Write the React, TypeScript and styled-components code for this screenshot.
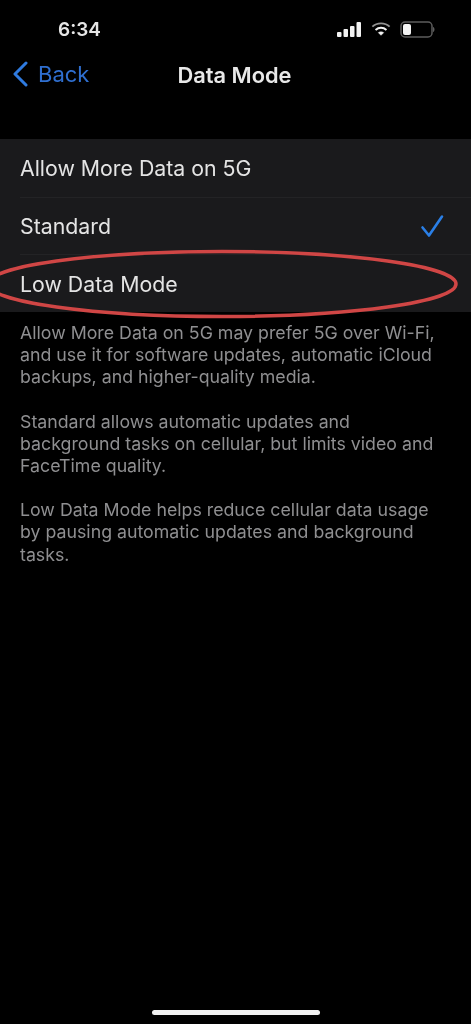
import styled, { createGlobalStyle } from "styled-components";

const GlobalStyle = createGlobalStyle`
  html, body {
    margin: 0;
    padding: 0;
    background: #000;
  }
`;

const Screen = styled.div`
  position: relative;
  width: 471px;
  height: 1024px;
  overflow: hidden;
  display: flex;
  flex-direction: column;
  background: #000;
  color: #e8e8e8;
  font-family: Inter, "Liberation Sans", sans-serif;
  filter: blur(0.5px);
`;

const StatusBar = styled.div`
  height: 58px;
  padding: 0 36px 0 58px;
  display: flex;
  align-items: center;
  justify-content: space-between;
  box-sizing: border-box;
`;

const Time = styled.span`
  font-size: 19px;
  font-weight: 600;
  color: #e6e6e6;
`;

const StatusIcons = styled.div`
  display: flex;
  align-items: center;
  gap: 9px;
`;

const NavBar = styled.div`
  position: relative;
  height: 34px;
  display: flex;
  align-items: center;
  justify-content: center;
`;

const BackLink = styled.div`
  position: absolute;
  left: 12px;
  top: 3px;
  display: flex;
  align-items: center;
  gap: 10px;
  color: #2f6fd0;
  font-size: 22px;
`;

const Title = styled.h1`
  margin: 0 2px 0 0;
  font-size: 21.8px;
  font-weight: 600;
  color: #e8e8e8;
`;

const Panel = styled.div`
  margin-top: 47px;
  background: #1a1a1c;
  display: flex;
  flex-direction: column;
`;

const Row = styled.div<{ $first?: boolean }>`
  height: 57.7px;
  margin-left: 20px;
  padding-right: 27px;
  display: flex;
  align-items: center;
  justify-content: space-between;
  font-size: 21.3px;
  color: #e4e4e4;
  border-top: ${(p) => (p.$first ? "none" : "1px solid #232325")};
  box-sizing: border-box;
`;

const Notes = styled.div`
  padding: 10px 20px 0;
  display: flex;
  flex-direction: column;
  gap: 22px;
`;

const Note = styled.p`
  margin: 0;
  font-size: 17.75px;
  line-height: 22.2px;
  color: #8f8f91;
  white-space: nowrap;
`;

const HomeIndicator = styled.div`
  margin: auto auto 9px;
  width: 168px;
  height: 5px;
  border-radius: 3px;
  background: #f2f2f2;
`;

const Annotation = styled.svg`
  position: absolute;
  left: 0;
  top: 245px;
`;

export default function App() {
  return (
    <Screen>
      <GlobalStyle />
      <StatusBar>
        <Time>6:34</Time>
        <StatusIcons>
          <svg width="25" height="15" viewBox="0 0 25 15" fill="#f2f2f2">
            <rect x="0" y="10" width="4.5" height="5" rx="1" />
            <rect x="6.5" y="7" width="4.5" height="8" rx="1" />
            <rect x="13" y="4" width="4.5" height="11" rx="1" />
            <rect x="19.5" y="0" width="4.5" height="15" rx="1" />
          </svg>
          <svg width="20" height="16" viewBox="0 0 22 17" fill="none" stroke="#f2f2f2">
            <path d="M1.5 6 C6.5 1 15.5 1 20.5 6" strokeWidth="2" opacity="0.6" />
            <path d="M5 9.5 C8.5 6.5 13.5 6.5 17 9.5" strokeWidth="2.2" />
            <path d="M11 15.5 L8 12.5 C9.5 11.3 12.5 11.3 14 12.5 Z" fill="#f2f2f2" strokeWidth="0.5" />
          </svg>
          <svg width="35" height="17" viewBox="0 0 35 17" fill="none">
            <rect x="1" y="1" width="31" height="15" rx="4" stroke="#5c5c5c" strokeWidth="1.5" />
            <rect x="3" y="3" width="8" height="11" rx="2" fill="#f4f4f4" />
            <path d="M33 6 C35 6.5 35 10.5 33 11 Z" fill="#5c5c5c" />
          </svg>
        </StatusIcons>
      </StatusBar>
      <NavBar>
        <BackLink>
          <svg width="16" height="26" viewBox="0 0 16 26" fill="none">
            <path d="M14 2 L3 13 L14 24" stroke="#2f7be0" strokeWidth="3" strokeLinecap="round" strokeLinejoin="round" />
          </svg>
          <span>Back</span>
        </BackLink>
        <Title>Data Mode</Title>
      </NavBar>
      <Panel>
        <Row $first>Allow More Data on 5G</Row>
        <Row>
          Standard
          <svg width="24" height="24" viewBox="0 0 24 24" fill="none">
            <path d="M2.5 13.5 L9 21.5 L22 2.5" stroke="#2a7fe6" strokeWidth="2.6" strokeLinecap="round" strokeLinejoin="round" />
          </svg>
        </Row>
        <Row>Low Data Mode</Row>
      </Panel>
      <Notes>
        <Note>
          Allow More Data on 5G may prefer 5G over Wi-Fi,
          <br />
          and use it for software updates, automatic iCloud
          <br />
          backups, and higher-quality media.
        </Note>
        <Note>
          Standard allows automatic updates and
          <br />
          background tasks on cellular, but limits video and
          <br />
          FaceTime quality.
        </Note>
        <Note>
          Low Data Mode helps reduce cellular data usage
          <br />
          by pausing automatic updates and background
          <br />
          tasks.
        </Note>
      </Notes>
      <HomeIndicator />
      <Annotation width="471" height="80" viewBox="0 0 471 80" fill="none">
        <ellipse cx="222" cy="39" rx="234" ry="32.5" stroke="#d04645" strokeWidth="3.5" />
      </Annotation>
    </Screen>
  );
}
